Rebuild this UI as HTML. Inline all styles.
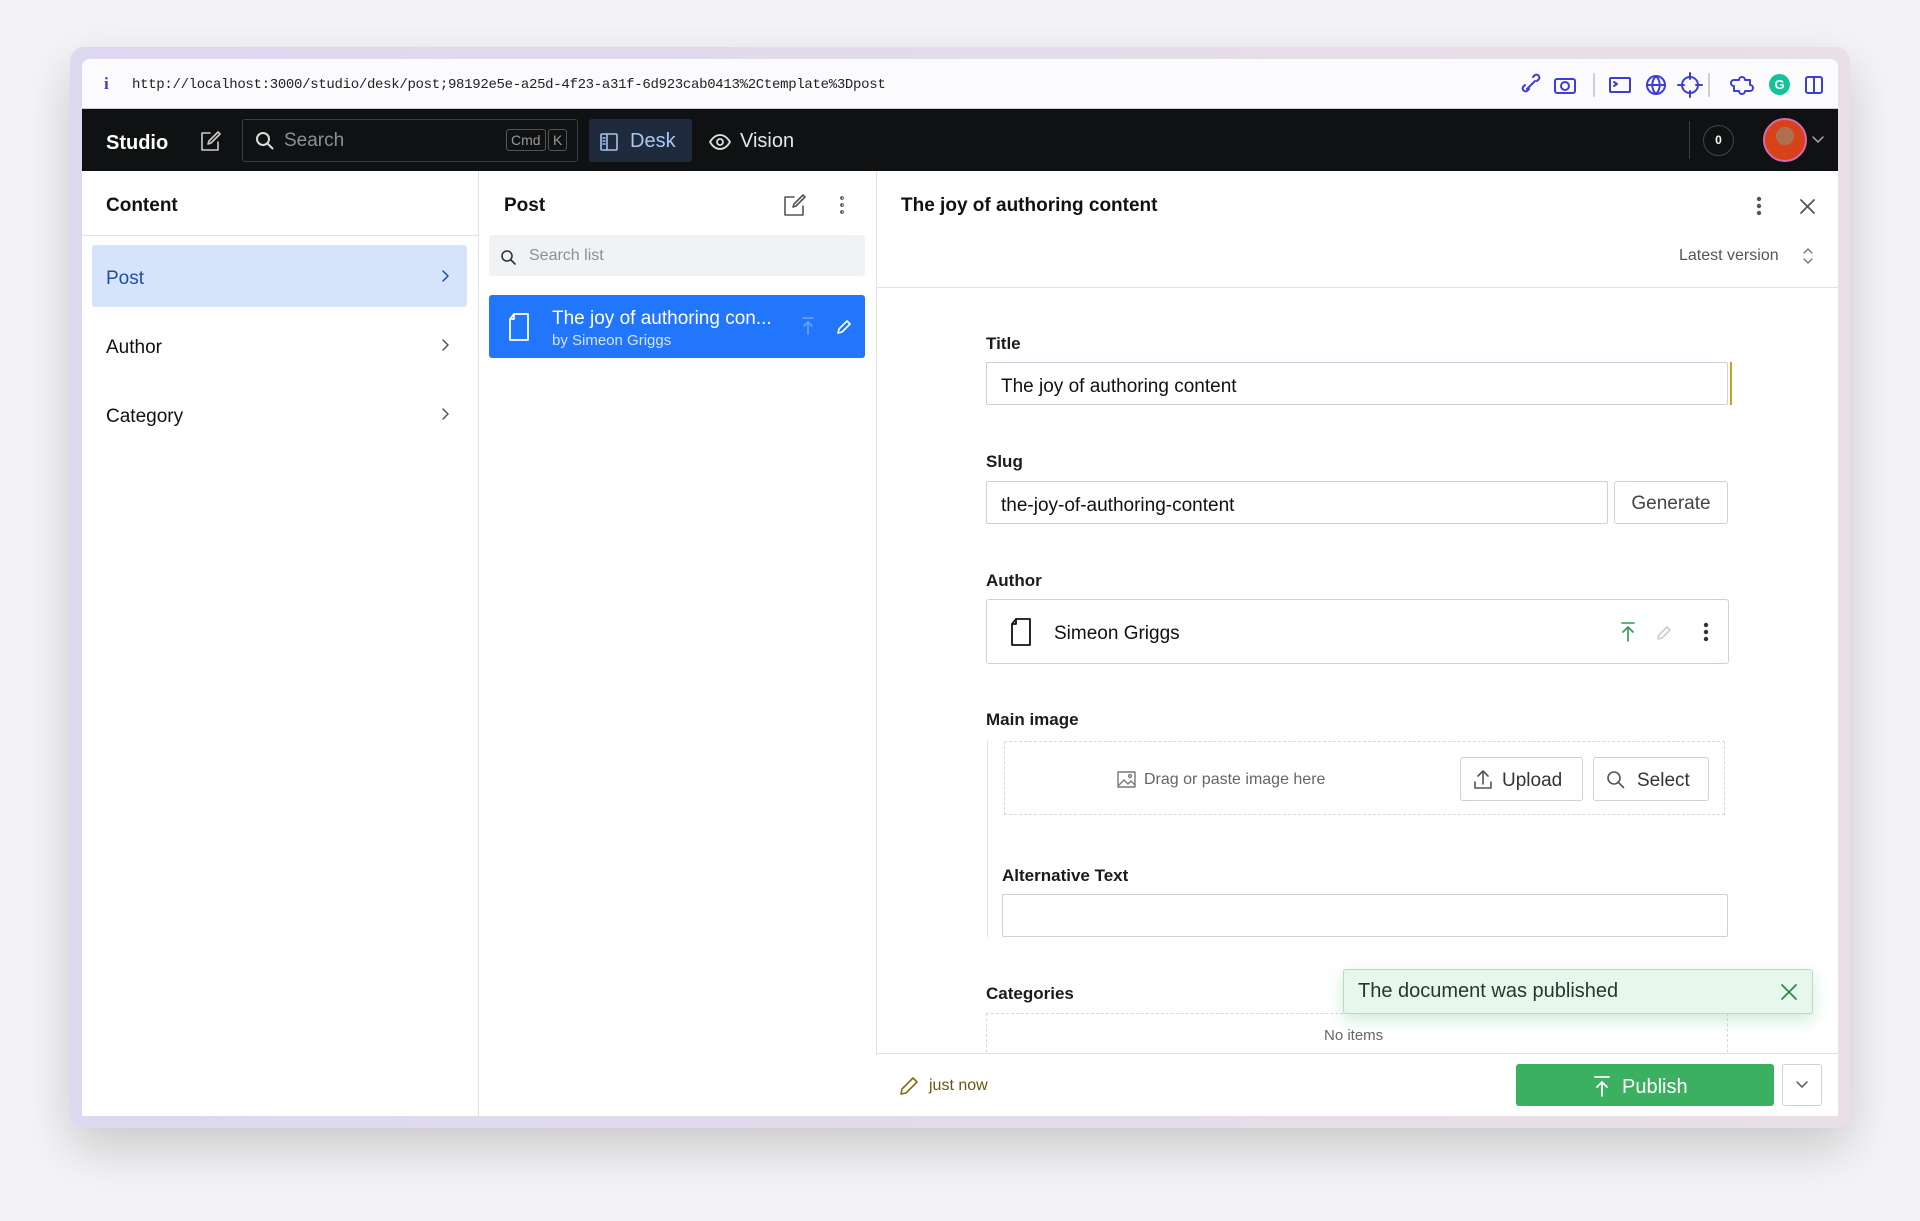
<!DOCTYPE html>
<html><head><meta charset="utf-8"><style>
*{box-sizing:border-box;margin:0;padding:0}
body{width:1920px;height:1221px;background:#f4f4f6;font-family:"Liberation Sans",sans-serif;position:relative;overflow:hidden;color:#101112}
div{line-height:1.65}
.a{position:absolute}
.win{left:70px;top:47px;width:1780px;height:1081px;border-radius:14px;background:linear-gradient(90deg,#ddd8ef,#eadfe6);box-shadow:0 20px 50px rgba(0,0,0,.18)}
.inner{left:82px;top:59px;width:1756px;height:1057px;background:#fff;border-radius:8px 8px 0 0;overflow:hidden}
svg{position:absolute;fill:none;stroke-linecap:round;stroke-linejoin:round}
.lbl{font-size:17px;font-weight:bold;color:#1a1b1e}
.inp{border:1px solid #ccd0d8;border-radius:2px;background:#fff}
</style></head><body>
<div class="a win"></div>
<div class="a inner">
 <div class="a" style="left:0;top:0;width:1756px;height:50px;background:#fbfbfe;border-bottom:1px solid #ccc"></div>
 <div class="a" style="left:22px;top:13px;font:bold 17px 'Liberation Serif',serif;color:#3b3bd6;line-height:1.4">i</div>
 <div class="a" style="left:50px;top:17px;font:14px 'Liberation Mono',monospace;color:#222;letter-spacing:-.3px;line-height:1.4">http://localhost:3000/studio/desk/post;98192e5e-a25d-4f23-a31f-6d923cab0413%2Ctemplate%3Dpost</div>
 <svg style="left:1430px;top:12px" width="320" height="28" stroke="#3d3dd8" stroke-width="2">
  <path d="M15 18l8-8M13 14l-2 2a3 3 0 004 4l2-2M25 10l2-2a3 3 0 00-4-4l-2 2"/>
  <rect x="43" y="8" width="20" height="14" rx="2"/><circle cx="53" cy="15" r="4"/>
  <line x1="82" y1="3" x2="82" y2="25" stroke="#ccd"/>
  <rect x="98" y="7" width="20" height="14" rx="1"/><path d="M102 11l3 2-3 2"/>
  <circle cx="144" cy="14" r="9"/><path d="M135 14h18M144 5c-5 5-5 13 0 18M144 5c5 5 5 13 0 18"/>
  <circle cx="178" cy="14" r="8"/><path d="M178 2v6M178 20v6M166 14h6M184 14h6"/>
  <line x1="197" y1="3" x2="197" y2="25" stroke="#ccd"/>
  <path d="M222 9h5a3 3 0 016 0h5v5a3 3 0 010 6h-5a3 3 0 01-6 0h-5v-5a3 3 0 010-6z"/>
  <rect x="294" y="6" width="16" height="16" rx="2"/><line x1="302" y1="6" x2="302" y2="22"/>
 </svg>
 <div class="a" style="left:1687px;top:15px;width:21px;height:21px;border-radius:50%;background:#15c39a;color:#fff;font:bold 13px 'Liberation Sans';text-align:center;line-height:21px">G</div>
 <div class="a" style="left:0;top:50px;width:1756px;height:62px;background:#101112"></div>
 <div class="a" style="left:24px;top:68px;color:#fff;font:bold 20px 'Liberation Sans';line-height:1.65">Studio</div>
 <svg style="left:116px;top:70px" width="24" height="24" stroke="#ccc" stroke-width="1.6"><path d="M12 4H4v17h16v-8M20 3l2 2-9 9-3 1 1-3z"/></svg>
 <div class="a" style="left:160px;top:60px;width:336px;height:43px;border:1px solid #3a3d44;border-radius:3px"></div>
 <svg style="left:172px;top:71px" width="22" height="22" stroke="#ddd" stroke-width="2"><circle cx="9" cy="9" r="6"/><path d="M13.5 13.5l5 5"/></svg>
 <div class="a" style="left:202px;top:66px;color:#8a8f98;font-size:19px">Search</div>
 <div class="a" style="left:424px;top:70px;border:1px solid #555;border-radius:3px;color:#999;font-size:14px;padding:0 4px;line-height:20px">Cmd</div>
 <div class="a" style="left:466px;top:70px;border:1px solid #555;border-radius:3px;color:#999;font-size:14px;padding:0 4px;line-height:20px">K</div>
 <div class="a" style="left:507px;top:60px;width:103px;height:43px;background:#1f2b3d;border-radius:3px"></div>
 <svg style="left:516px;top:72px" width="22" height="22" stroke="#a9c2e8" stroke-width="1.6"><rect x="3" y="3" width="16" height="16" rx="1"/><path d="M9 3v16M5 7h2M5 10h2M5 13h2"/></svg>
 <div class="a" style="left:548px;top:66px;color:#a9c8f5;font-size:20px">Desk</div>
 <svg style="left:626px;top:72px" width="24" height="22" stroke="#ddd" stroke-width="1.8"><path d="M2 11c3-5 6-7 10-7s7 2 10 7c-3 5-6 7-10 7s-7-2-10-7z"/><circle cx="12" cy="11" r="3"/></svg>
 <div class="a" style="left:658px;top:66px;color:#e6e6e6;font-size:20px">Vision</div>
 <div class="a" style="left:1607px;top:62px;width:1px;height:38px;background:#3a3d44"></div>
 <div class="a" style="left:1621px;top:66px;width:31px;height:31px;border:1.5px solid #444;border-radius:50%;color:#fff;font:bold 12px 'Liberation Sans';text-align:center;line-height:28px">0</div>
 <div class="a" style="left:1681px;top:59px;width:44px;height:44px;border-radius:50%;border:2px solid #d36ab0;background:radial-gradient(circle at 50% 40%,#b07050 0 28%,#d8421b 30%)"></div>
 <svg style="left:1729px;top:76px" width="14" height="10" stroke="#aaa" stroke-width="1.5"><path d="M2 2l5 5 5-5"/></svg>
 <div class="a" style="left:396px;top:112px;width:1px;height:945px;background:#dfe1e6"></div>
 <div class="a" style="left:794px;top:112px;width:1px;height:945px;background:#dfe1e6"></div>
 <div class="a" style="left:0;top:176px;width:396px;height:1px;background:#dfe1e6"></div>
 <div class="a" style="left:794px;top:228px;width:962px;height:1px;background:#dfe1e6"></div>
 <div class="a" style="left:24px;top:131px;font:bold 19px 'Liberation Sans';line-height:1.65">Content</div>
 <div class="a" style="left:10px;top:186px;width:375px;height:62px;background:#d5e3fb;border-radius:3px"></div>
 <div class="a" style="left:24px;top:204px;font-size:19px;color:#1d4fa8">Post</div>
 <div class="a" style="left:24px;top:273px;font-size:19px">Author</div>
 <div class="a" style="left:24px;top:342px;font-size:19px">Category</div>
 <svg style="left:358px;top:210px" width="12" height="160" stroke="#555" stroke-width="1.5"><path d="M3 2l5 5-5 5" stroke="#1d4fa8"/><path d="M3 71l5 5-5 5M3 140l5 5-5 5"/></svg>
 <div class="a" style="left:422px;top:131px;font:bold 19px 'Liberation Sans';line-height:1.65">Post</div>
 <svg style="left:700px;top:134px" width="60" height="26" stroke="#555" stroke-width="1.6"><path d="M12 4H3v18h18v-9M21 2l2 2-9 9-3 1 1-3z"/><circle cx="61" cy="5" r="1.3" fill="#555"/><circle cx="61" cy="12" r="1.3" fill="#555"/><circle cx="61" cy="19" r="1.3" fill="#555"/></svg>
 <svg style="left:756px;top:136px" width="10" height="26" stroke="#555" fill="#555"><circle cx="4" cy="3" r="1.4"/><circle cx="4" cy="10" r="1.4"/><circle cx="4" cy="17" r="1.4"/></svg>
 <div class="a" style="left:407px;top:176px;width:376px;height:41px;background:#f1f2f4;border-radius:3px"></div>
 <svg style="left:418px;top:190px" width="18" height="18" stroke="#333" stroke-width="1.6"><circle cx="7" cy="7" r="5"/><path d="M11 11l4 4"/></svg>
 <div class="a" style="left:447px;top:184px;font-size:16px;color:#8a8f98">Search list</div>
 <div class="a" style="left:407px;top:236px;width:376px;height:63px;background:#2276fc;border-radius:3px"></div>
 <svg style="left:424px;top:252px" width="26" height="32" stroke="#fff" stroke-width="1.8"><path d="M8 3h14v26H4V8z"/><path d="M8 3v5H4"/></svg>
 <div class="a" style="left:470px;top:244px;font-size:19px;color:#fff">The joy of authoring con...</div>
 <div class="a" style="left:470px;top:270px;font-size:15px;color:#d4e3ff">by Simeon Griggs</div>
 <svg style="left:717px;top:257px" width="54" height="22" stroke-width="1.6"><path d="M4 2h10M9 18V6M5 10l4-4 4 4" stroke="#6ea4ff"/><path d="M39 17l1-4 8-8 3 3-8 8z" stroke="#fff"/></svg>
 <div class="a" style="left:819px;top:131px;font:bold 19px 'Liberation Sans';line-height:1.65">The joy of authoring content</div>
 <svg style="left:1672px;top:136px" width="80" height="24" stroke="#555" stroke-width="1.8"><circle cx="5" cy="4" r="1.3" fill="#555"/><circle cx="5" cy="11" r="1.3" fill="#555"/><circle cx="5" cy="18" r="1.3" fill="#555"/><path d="M47 5l13 13M60 5L47 18"/></svg>
 <div class="a" style="left:1597px;top:184px;font-size:16px;color:#555">Latest version</div>
 <svg style="left:1720px;top:187px" width="12" height="20" stroke="#777" stroke-width="1.4"><path d="M2 7l4-4 4 4M2 13l4 4 4-4"/></svg>
 <div class="a lbl" style="left:904px;top:271px">Title</div>
 <div class="a inp" style="left:904px;top:303px;width:742px;height:43px"></div>
 <div class="a" style="left:1648px;top:303px;width:2px;height:43px;background:#c9a21a"></div>
 <div class="a" style="left:919px;top:312px;font-size:19px">The joy of authoring content</div>
 <div class="a lbl" style="left:904px;top:389px">Slug</div>
 <div class="a inp" style="left:904px;top:422px;width:622px;height:43px"></div>
 <div class="a" style="left:919px;top:431px;font-size:19px">the-joy-of-authoring-content</div>
 <div class="a inp" style="left:1532px;top:422px;width:114px;height:43px;border-radius:3px;font-size:19px;color:#444;text-align:center;line-height:43px">Generate</div>
 <div class="a lbl" style="left:904px;top:508px">Author</div>
 <div class="a inp" style="left:904px;top:540px;width:743px;height:65px;border-radius:3px"></div>
 <svg style="left:926px;top:557px" width="26" height="32" stroke="#111" stroke-width="1.8"><path d="M8 3h14v26H4V8z"/><path d="M8 3v5H4"/></svg>
 <div class="a" style="left:972px;top:559px;font-size:19px">Simeon Griggs</div>
 <svg style="left:1536px;top:561px" width="100" height="24" stroke-width="1.6"><path d="M4 3h12M10 21V7M5 12l5-5 5 5" stroke="#2f9b4f"/><path d="M40 19l1-4 8-8 3 3-8 8z" stroke="#ccc"/><circle cx="88" cy="5" r="1.4" fill="#333" stroke="#333"/><circle cx="88" cy="12" r="1.4" fill="#333" stroke="#333"/><circle cx="88" cy="19" r="1.4" fill="#333" stroke="#333"/></svg>
 <div class="a lbl" style="left:904px;top:647px">Main image</div>
 <div class="a" style="left:905px;top:682px;width:1px;height:196px;background:#dfe1e6"></div>
 <div class="a" style="left:922px;top:682px;width:721px;height:74px;border:1.5px dashed #d5d8de"></div>
 <svg style="left:1035px;top:712px" width="20" height="18" stroke="#777" stroke-width="1.4"><rect x="1" y="1" width="17" height="15"/><path d="M2 14l5-5 4 4 3-3 4 4"/><circle cx="13" cy="5" r="1.4"/></svg>
 <div class="a" style="left:1062px;top:708px;font-size:16px;color:#666">Drag or paste image here</div>
 <div class="a inp" style="left:1378px;top:698px;width:123px;height:44px;border-radius:3px"></div>
 <svg style="left:1390px;top:709px" width="22" height="24" stroke="#555" stroke-width="1.6"><path d="M11 16V3M6 8l5-5 5 5M3 14v6h16v-6"/></svg>
 <div class="a" style="left:1420px;top:706px;font-size:19px;color:#333">Upload</div>
 <div class="a inp" style="left:1511px;top:698px;width:116px;height:44px;border-radius:3px"></div>
 <svg style="left:1524px;top:711px" width="20" height="20" stroke="#555" stroke-width="1.6"><circle cx="8" cy="8" r="6"/><path d="M12.5 12.5l5 5"/></svg>
 <div class="a" style="left:1555px;top:706px;font-size:19px;color:#333">Select</div>
 <div class="a lbl" style="left:920px;top:803px">Alternative Text</div>
 <div class="a inp" style="left:920px;top:835px;width:726px;height:43px"></div>
 <div class="a lbl" style="left:904px;top:921px">Categories</div>
 <div class="a" style="left:904px;top:954px;width:742px;height:50px;border:1.5px dashed #d5d8de;border-bottom:none"></div>
 <div class="a" style="left:1242px;top:965px;font-size:15px;color:#666">No items</div>
 <div class="a" style="left:794px;top:994px;width:962px;height:63px;background:#fff;border-top:1px solid #dfe1e6"></div>
 <svg style="left:816px;top:1016px" width="22" height="22" stroke="#8a6a1a" stroke-width="1.6"><path d="M3 19l1-5 11-11 4 4-11 11z"/></svg>
 <div class="a" style="left:847px;top:1014px;font-size:16px;color:#6b5510">just now</div>
 <div class="a" style="left:1434px;top:1005px;width:258px;height:42px;background:#3cb061;border-radius:3px"></div>
 <svg style="left:1509px;top:1015px" width="22" height="24" stroke="#fff" stroke-width="1.8"><path d="M4 3h14M11 22V8M6 13l5-5 5 5"/></svg>
 <div class="a" style="left:1540px;top:1012px;font-size:20px;color:#fff">Publish</div>
 <div class="a inp" style="left:1700px;top:1005px;width:40px;height:42px;border-radius:3px"></div>
 <svg style="left:1713px;top:1021px" width="14" height="10" stroke="#555" stroke-width="1.5"><path d="M2 2l5 5 5-5"/></svg>
 <div class="a" style="left:1261px;top:910px;width:470px;height:45px;background:#e8f7ec;border:1px solid #aee0bd;border-radius:3px;box-shadow:0 6px 16px rgba(60,176,97,.25)"></div>
 <div class="a" style="left:1276px;top:916px;font-size:20px;color:#1f3a27">The document was published</div>
 <svg style="left:1697px;top:923px" width="20" height="20" stroke="#2e8a4a" stroke-width="1.8"><path d="M3 3l14 14M17 3L3 17"/></svg>
</div>
</body></html>
